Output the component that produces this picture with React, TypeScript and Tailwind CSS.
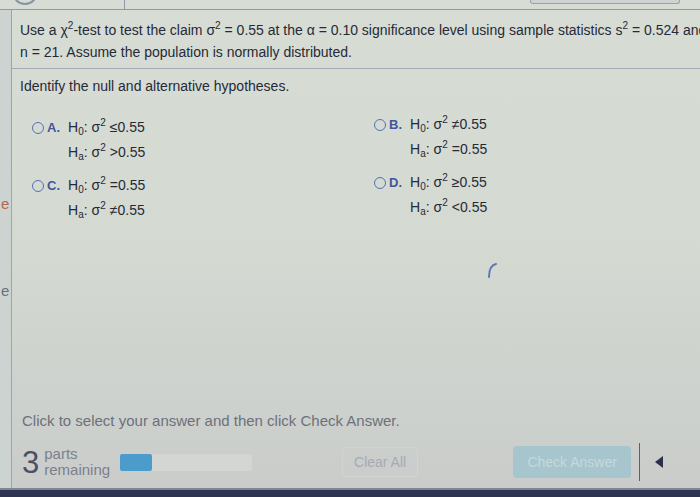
import React from "react";

type Option = {
    letter: string;
    h0: string;
    ha: string;
};

const leftOptions: Option[] = [
    { letter: "A.", h0: "\u2264", ha: ">" },
    { letter: "C.", h0: "=", ha: "\u2260" },
];

const rightOptions: Option[] = [
    { letter: "B.", h0: "\u2260", ha: "=" },
    { letter: "D.", h0: "\u2265", ha: "<" },
];

function Sigma2() {
    return (
        <span>
            σ<sup className="text-[10px] relative -top-[6px]">2</sup>
        </span>
    );
}

function Hyp({ sub, sign }: { sub: string; sign: string }) {
    return (
        <div className="h-[25px] flex items-center whitespace-nowrap">
            <span>
                H<sub className="text-[10px] relative top-[3px]">{sub}</sub>
            </span>
            <span className="mr-[4px]">:</span>
            <Sigma2 />
            <span className="ml-[4px]">{sign}</span>
            <span>0.55</span>
        </div>
    );
}

function OptionRow({ option }: { option: Option }) {
    return (
        <div className="flex items-start">
            <div className="h-[25px] flex items-center">
                <span className="w-[12px] h-[12px] rounded-full border-[1.5px] border-[#5571b4]" />
            </div>
            <div className="h-[25px] flex items-center w-[24px] pl-[3px] font-bold text-[13px] text-[#41579a]">
                {option.letter}
            </div>
            <div className="flex flex-col">
                <Hyp sub="0" sign={option.h0} />
                <Hyp sub="a" sign={option.ha} />
            </div>
        </div>
    );
}

export default function App() {
    return (
        <div className="w-[700px] h-[497px] overflow-hidden relative flex flex-col bg-gradient-to-b from-[#d7ddd5] via-[#d4d9d2] to-[#c9ccca] font-['Liberation_Sans',Arial,sans-serif] text-[#262a36]">
            {/* top strip */}
            <div className="h-[10px] shrink-0 flex items-start border-b border-[#8f9ba6] relative">
                <div className="w-[12px]" />
                <div className="w-[26px] h-[26px] -mt-[21px] rounded-full border-2 border-[#8a93a3]" />
                <div className="w-[86px]" />
                <div className="w-[1px] h-[10px] bg-[#8f98a8]" />
                <div className="flex-1" />
                <div className="w-[150px] h-[4px] rounded-b-[3px] border border-t-0 border-[#9aa2ad] bg-[#cfd4d2] mr-[20px]" />
            </div>

            {/* body */}
            <div className="flex-1 flex min-h-0">
                <div className="w-[12px] shrink-0 border-r border-[#9aa3b3] bg-[#cdd3d0] overflow-hidden flex flex-col items-start text-[15px]">
                    <div className="h-[186px]" />
                    <span className="text-[#b26a4a] leading-none pl-[1px]">e</span>
                    <div className="h-[72px]" />
                    <span className="text-[#6b707b] leading-none pl-[1px]">e</span>
                </div>

                <div className="flex-1 min-w-0 flex flex-col">
                    <div className="pl-[8px] pt-[9px] text-[14px] leading-[22px]">
                        <div className="whitespace-nowrap overflow-hidden">
                            Use a χ<sup className="text-[10px] -top-[6px] relative">2</sup>-test to test the claim <Sigma2 /> = 0.55 at the α = 0.10 significance level using sample statistics s<sup className="text-[10px] relative -top-[6px]">2</sup> = 0.524 and
                        </div>
                        <div className="whitespace-nowrap">n = 21. Assume the population is normally distributed.</div>
                    </div>

                    <div className="mt-[5px] border-t border-[#a4acb6]" />

                    <div className="pl-[8px] pt-[6px] text-[14px] leading-[22px]">
                        Identify the null and alternative hypotheses.
                    </div>

                    <div className="flex pt-[18px] pl-[20px] text-[14px]">
                        <div className="w-[342px] flex flex-col gap-[8px]">
                            {leftOptions.map((o) => (
                                <OptionRow key={o.letter} option={o} />
                            ))}
                        </div>
                        <div className="flex flex-col gap-[8px] -mt-[3px]">
                            {rightOptions.map((o) => (
                                <OptionRow key={o.letter} option={o} />
                            ))}
                        </div>
                    </div>

                    <div className="flex-1" />

                    <div className="pl-[10px] text-[15px] leading-[18px] text-[#6c707b]">
                        Click to select your answer and then click Check Answer.
                    </div>

                    <div className="h-[48px] mt-[10px] flex items-center pl-[10px] pb-[4px]">
                        <span className="text-[31px] leading-none text-[#4b5066]">3</span>
                        <div className="ml-[5px] flex flex-col text-[15px] leading-[16px] text-[#7c808c]">
                            <span>parts</span>
                            <span>remaining</span>
                        </div>
                        <div className="ml-[10px] w-[132px] h-[17px] flex bg-[#d3d6d2] rounded-[2px]">
                            <div className="w-[32px] h-full bg-[#4b9ccb] rounded-[2px]" />
                        </div>
                        <div className="ml-[90px] w-[76px] h-[30px] flex items-center justify-center border border-[#d2d4d1] rounded-[3px] text-[14px] text-[#a7aab1]">
                            Clear All
                        </div>
                        <div className="ml-[95px] w-[118px] h-[32px] rounded-[4px] bg-[#a7c5cd] flex items-center justify-center text-[14px] text-[#c6d9dc]">
                            Check Answer
                        </div>
                        <div className="ml-[8px] w-[1px] h-[38px] bg-[#5c6170]" />
                        <div className="ml-[15px] w-0 h-0 border-y-[6px] border-y-transparent border-r-[8px] border-r-[#2b3049]" />
                    </div>
                </div>
            </div>

            {/* bottom frame */}
            <div className="h-[9px] shrink-0 border-t-2 border-[#7d8596] bg-[#2f3550]" />

            {/* pen mark on the screen */}
            <svg className="absolute left-[486px] top-[262px]" width="12" height="18" viewBox="0 0 12 18">
                <path d="M10 2 C5 3 3 8 3 15" stroke="#5a79b6" strokeWidth="2" fill="none" strokeLinecap="round" />
            </svg>
        </div>
    );
}
